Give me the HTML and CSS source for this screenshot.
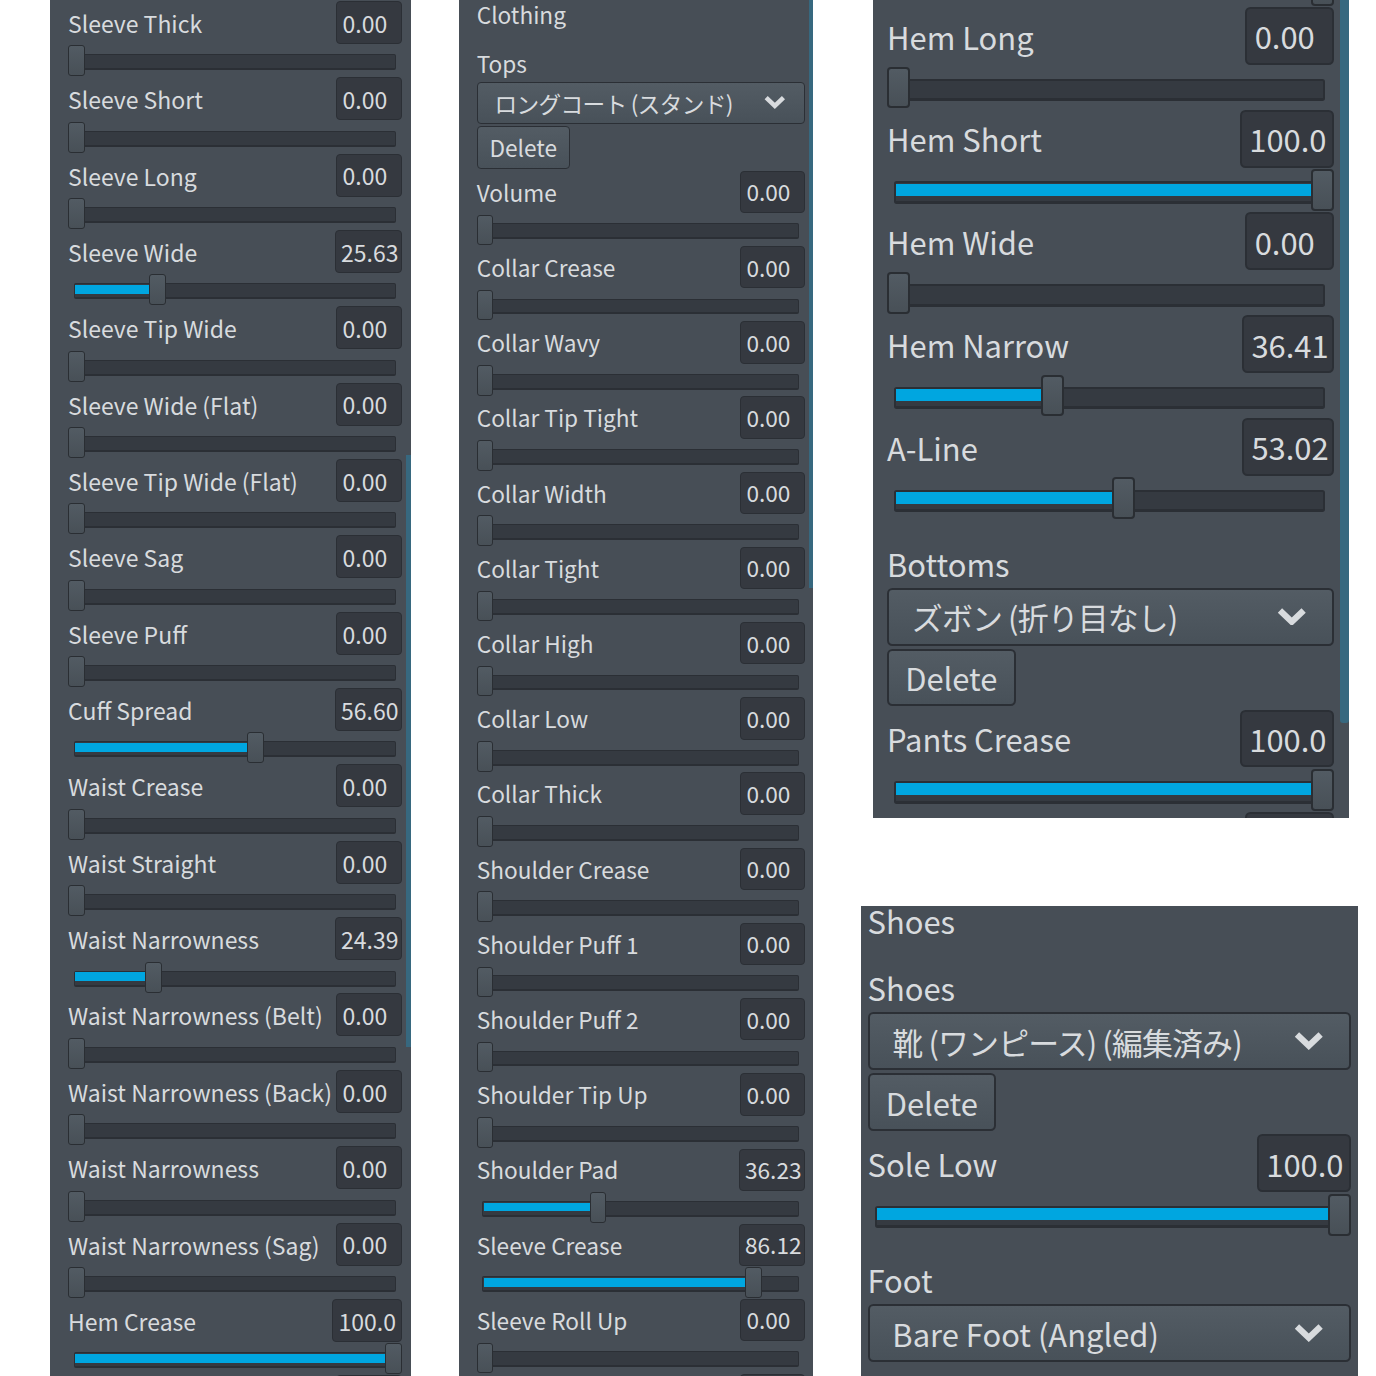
FILE: index.html
```html
<!DOCTYPE html>
<html lang="en">
<head>
<meta charset="utf-8">
<title>Clothing sliders</title>
<link rel="stylesheet" href="styles.css">
</head>
<body>
<div class="canvas">

  <section class="panel p-left">
    <div class="content">
      <div class="list">
        <div class="row"><div class="row-head"><span class="lbl">Sleeve Thick</span><span class="val">0.00</span></div><div class="slider" style="--v:0"><div class="fill"></div><div class="grab"></div></div></div>
        <div class="row"><div class="row-head"><span class="lbl">Sleeve Short</span><span class="val">0.00</span></div><div class="slider" style="--v:0"><div class="fill"></div><div class="grab"></div></div></div>
        <div class="row"><div class="row-head"><span class="lbl">Sleeve Long</span><span class="val">0.00</span></div><div class="slider" style="--v:0"><div class="fill"></div><div class="grab"></div></div></div>
        <div class="row"><div class="row-head"><span class="lbl">Sleeve Wide</span><span class="val">25.63</span></div><div class="slider" style="--v:0.2563"><div class="fill"></div><div class="grab"></div></div></div>
        <div class="row"><div class="row-head"><span class="lbl">Sleeve Tip Wide</span><span class="val">0.00</span></div><div class="slider" style="--v:0"><div class="fill"></div><div class="grab"></div></div></div>
        <div class="row"><div class="row-head"><span class="lbl">Sleeve Wide (Flat)</span><span class="val">0.00</span></div><div class="slider" style="--v:0"><div class="fill"></div><div class="grab"></div></div></div>
        <div class="row"><div class="row-head"><span class="lbl">Sleeve Tip Wide (Flat)</span><span class="val">0.00</span></div><div class="slider" style="--v:0"><div class="fill"></div><div class="grab"></div></div></div>
        <div class="row"><div class="row-head"><span class="lbl">Sleeve Sag</span><span class="val">0.00</span></div><div class="slider" style="--v:0"><div class="fill"></div><div class="grab"></div></div></div>
        <div class="row"><div class="row-head"><span class="lbl">Sleeve Puff</span><span class="val">0.00</span></div><div class="slider" style="--v:0"><div class="fill"></div><div class="grab"></div></div></div>
        <div class="row"><div class="row-head"><span class="lbl">Cuff Spread</span><span class="val">56.60</span></div><div class="slider" style="--v:0.566"><div class="fill"></div><div class="grab"></div></div></div>
        <div class="row"><div class="row-head"><span class="lbl">Waist Crease</span><span class="val">0.00</span></div><div class="slider" style="--v:0"><div class="fill"></div><div class="grab"></div></div></div>
        <div class="row"><div class="row-head"><span class="lbl">Waist Straight</span><span class="val">0.00</span></div><div class="slider" style="--v:0"><div class="fill"></div><div class="grab"></div></div></div>
        <div class="row"><div class="row-head"><span class="lbl">Waist Narrowness</span><span class="val">24.39</span></div><div class="slider" style="--v:0.2439"><div class="fill"></div><div class="grab"></div></div></div>
        <div class="row"><div class="row-head"><span class="lbl">Waist Narrowness (Belt)</span><span class="val">0.00</span></div><div class="slider" style="--v:0"><div class="fill"></div><div class="grab"></div></div></div>
        <div class="row"><div class="row-head"><span class="lbl">Waist Narrowness (Back)</span><span class="val">0.00</span></div><div class="slider" style="--v:0"><div class="fill"></div><div class="grab"></div></div></div>
        <div class="row"><div class="row-head"><span class="lbl">Waist Narrowness</span><span class="val">0.00</span></div><div class="slider" style="--v:0"><div class="fill"></div><div class="grab"></div></div></div>
        <div class="row"><div class="row-head"><span class="lbl">Waist Narrowness (Sag)</span><span class="val">0.00</span></div><div class="slider" style="--v:0"><div class="fill"></div><div class="grab"></div></div></div>
        <div class="row"><div class="row-head"><span class="lbl">Hem Crease</span><span class="val w">100.0</span></div><div class="slider" style="--v:1"><div class="fill"></div><div class="grab"></div></div></div>
        <div class="row"><div class="row-head"><span class="lbl"></span><span class="val"></span></div></div>
      </div>
    </div>
    <div class="vbar"><div class="thumb"></div></div>
  </section>

  <section class="panel p-mid">
    <div class="content">
      <div class="list">
        <div class="lblock">Clothing</div>
        <div class="lblock">Tops</div>
        <div class="dd"><span class="dd-text jp">ロングコート (スタンド)</span><svg class="chev" viewBox="0 0 22 14" aria-hidden="true"><path d="M2.2 2.6 L11 11 L19.8 2.6"/></svg></div>
        <div class="btn-line"><span class="btn">Delete</span></div>
        <div class="row"><div class="row-head"><span class="lbl">Volume</span><span class="val">0.00</span></div><div class="slider" style="--v:0"><div class="fill"></div><div class="grab"></div></div></div>
        <div class="row"><div class="row-head"><span class="lbl">Collar Crease</span><span class="val">0.00</span></div><div class="slider" style="--v:0"><div class="fill"></div><div class="grab"></div></div></div>
        <div class="row"><div class="row-head"><span class="lbl">Collar Wavy</span><span class="val">0.00</span></div><div class="slider" style="--v:0"><div class="fill"></div><div class="grab"></div></div></div>
        <div class="row"><div class="row-head"><span class="lbl">Collar Tip Tight</span><span class="val">0.00</span></div><div class="slider" style="--v:0"><div class="fill"></div><div class="grab"></div></div></div>
        <div class="row"><div class="row-head"><span class="lbl">Collar Width</span><span class="val">0.00</span></div><div class="slider" style="--v:0"><div class="fill"></div><div class="grab"></div></div></div>
        <div class="row"><div class="row-head"><span class="lbl">Collar Tight</span><span class="val">0.00</span></div><div class="slider" style="--v:0"><div class="fill"></div><div class="grab"></div></div></div>
        <div class="row"><div class="row-head"><span class="lbl">Collar High</span><span class="val">0.00</span></div><div class="slider" style="--v:0"><div class="fill"></div><div class="grab"></div></div></div>
        <div class="row"><div class="row-head"><span class="lbl">Collar Low</span><span class="val">0.00</span></div><div class="slider" style="--v:0"><div class="fill"></div><div class="grab"></div></div></div>
        <div class="row"><div class="row-head"><span class="lbl">Collar Thick</span><span class="val">0.00</span></div><div class="slider" style="--v:0"><div class="fill"></div><div class="grab"></div></div></div>
        <div class="row"><div class="row-head"><span class="lbl">Shoulder Crease</span><span class="val">0.00</span></div><div class="slider" style="--v:0"><div class="fill"></div><div class="grab"></div></div></div>
        <div class="row"><div class="row-head"><span class="lbl">Shoulder Puff 1</span><span class="val">0.00</span></div><div class="slider" style="--v:0"><div class="fill"></div><div class="grab"></div></div></div>
        <div class="row"><div class="row-head"><span class="lbl">Shoulder Puff 2</span><span class="val">0.00</span></div><div class="slider" style="--v:0"><div class="fill"></div><div class="grab"></div></div></div>
        <div class="row"><div class="row-head"><span class="lbl">Shoulder Tip Up</span><span class="val">0.00</span></div><div class="slider" style="--v:0"><div class="fill"></div><div class="grab"></div></div></div>
        <div class="row"><div class="row-head"><span class="lbl">Shoulder Pad</span><span class="val">36.23</span></div><div class="slider" style="--v:0.3623"><div class="fill"></div><div class="grab"></div></div></div>
        <div class="row"><div class="row-head"><span class="lbl">Sleeve Crease</span><span class="val">86.12</span></div><div class="slider" style="--v:0.8612"><div class="fill"></div><div class="grab"></div></div></div>
        <div class="row"><div class="row-head"><span class="lbl">Sleeve Roll Up</span><span class="val">0.00</span></div><div class="slider" style="--v:0"><div class="fill"></div><div class="grab"></div></div></div>
        <div class="row"><div class="row-head"><span class="lbl"></span><span class="val"></span></div></div>
      </div>
    </div>
    <div class="vbar"><div class="thumb"></div></div>
  </section>

  <div class="col-right">
    <section class="panel p-tr">
      <div class="content">
        <div class="list">
          <div class="row"><div class="row-head"></div><div class="slider" style="--v:1"><div class="fill"></div><div class="grab"></div></div></div>
          <div class="row"><div class="row-head"><span class="lbl">Hem Long</span><span class="val">0.00</span></div><div class="slider" style="--v:0"><div class="fill"></div><div class="grab"></div></div></div>
          <div class="row"><div class="row-head"><span class="lbl">Hem Short</span><span class="val w">100.0</span></div><div class="slider" style="--v:1"><div class="fill"></div><div class="grab"></div></div></div>
          <div class="row"><div class="row-head"><span class="lbl">Hem Wide</span><span class="val">0.00</span></div><div class="slider" style="--v:0"><div class="fill"></div><div class="grab"></div></div></div>
          <div class="row"><div class="row-head"><span class="lbl">Hem Narrow</span><span class="val">36.41</span></div><div class="slider" style="--v:0.3641"><div class="fill"></div><div class="grab"></div></div></div>
          <div class="row"><div class="row-head"><span class="lbl">A-Line</span><span class="val">53.02</span></div><div class="slider" style="--v:0.5302"><div class="fill"></div><div class="grab"></div></div></div>
          <div class="lblock">Bottoms</div>
          <div class="dd"><span class="dd-text jp">ズボン (折り目なし)</span><svg class="chev" viewBox="0 0 22 14" aria-hidden="true"><path d="M2.2 2.6 L11 11 L19.8 2.6"/></svg></div>
          <div class="btn-line"><span class="btn">Delete</span></div>
          <div class="row"><div class="row-head"><span class="lbl">Pants Crease</span><span class="val w">100.0</span></div><div class="slider" style="--v:1"><div class="fill"></div><div class="grab"></div></div></div>
          <div class="row"><div class="row-head"><span class="lbl"></span><span class="val"></span></div></div>
        </div>
      </div>
      <div class="vbar"><div class="thumb"></div></div>
    </section>

    <section class="panel p-br">
      <div class="content">
        <div class="list">
          <div class="lblock">Shoes</div>
          <div class="lblock">Shoes</div>
          <div class="dd"><span class="dd-text jp">靴 (ワンピース) (編集済み)</span><svg class="chev" viewBox="0 0 22 14" aria-hidden="true"><path d="M2.2 2.6 L11 11 L19.8 2.6"/></svg></div>
          <div class="btn-line"><span class="btn">Delete</span></div>
          <div class="row"><div class="row-head"><span class="lbl">Sole Low</span><span class="val w">100.0</span></div><div class="slider" style="--v:1"><div class="fill"></div><div class="grab"></div></div></div>
          <div class="lblock">Foot</div>
          <div class="dd"><span class="dd-text">Bare Foot (Angled)</span><svg class="chev" viewBox="0 0 22 14" aria-hidden="true"><path d="M2.2 2.6 L11 11 L19.8 2.6"/></svg></div>
        </div>
      </div>
      <div class="vbar"></div>
    </section>
  </div>

</div>
</body>
</html>
```

FILE: styles.css
```css
* {
  box-sizing: border-box;
  margin: 0;
  padding: 0;
}

html, body {
  background: #ffffff;
}

body {
  font-family: "Noto Sans CJK JP", "Noto Sans", sans-serif;
  color: #d8dbde;
}

.canvas {
  display: flex;
  align-items: flex-start;
  gap: 48px;
  padding-left: 50px;
  height: 1376px;
  overflow: hidden;
}

.col-right {
  display: flex;
  flex-direction: column;
  align-items: flex-start;
}

/* ---------- panel ---------- */
.panel {
  --u: 1px;
  display: flex;
  background: #474e56;
  overflow: hidden;
  font-size: calc(23 * var(--u));
  line-height: 1;
  flex: none;
}

.panel .content {
  flex: 1;
  min-width: 0;
}

.panel .vbar {
  flex: none;
  display: flex;
  justify-content: flex-end;
}

.panel .thumb {
  background: #37687f;
}

.p-left {
  --u: 1px;
  width: 361px;
  height: 1376px;
}
.p-left .content { padding-left: 18px; }
.p-left .list { margin-top: calc(1 * var(--u)); }
.p-left .vbar { width: 9px; }
.p-left .thumb { width: 5px; height: 592px; margin-top: 455px; }

.p-mid {
  --u: 0.985px;
  width: 354px;
  height: 1376px;
}
.p-mid .content { padding-left: 17.7px; }
.p-mid .list { margin-top: calc(-17.1 * var(--u)); }
.p-mid .vbar { width: 8px; }
.p-mid .thumb { width: 4px; height: 588px; }

.p-tr {
  --u: 1.345px;
  width: 476px;
  height: 818px;
  margin-left: 12px;
}
.p-tr .content { padding-left: 14px; }
.p-tr .list { margin-top: calc(-71.15 * var(--u)); }
.p-tr .vbar { width: 15px; }
.p-tr .thumb { width: 9px; height: 723px; border-radius: 0 0 3px 3px; }

.p-br {
  --u: 1.345px;
  width: 497px;
  height: 470px;
  margin-top: 88px;
}
.p-br .content { padding-left: 6.5px; }
.p-br .list { margin-top: calc(-20.9 * var(--u)); }
.p-br .vbar { width: 7px; }

/* ---------- slider rows ---------- */
.row {
  height: calc(76.35 * var(--u));
}

.row-head {
  display: flex;
  align-items: center;
  justify-content: space-between;
  height: calc(43 * var(--u));
}

.lbl {
  padding-top: calc(2 * var(--u));
  white-space: nowrap;
}

.val {
  display: flex;
  align-items: center;
  height: 100%;
  min-width: calc(66 * var(--u));
  padding: calc(1.5 * var(--u)) calc(2.5 * var(--u)) 0 calc(5.5 * var(--u));
  background: #353940;
  border: calc(1.5 * var(--u)) solid #2b2f35;
  border-radius: calc(4 * var(--u));
  white-space: nowrap;
}

.val.w {
  min-width: calc(70 * var(--u));
}

.slider {
  position: relative;
  height: calc(31 * var(--u));
  margin-top: calc(1.4 * var(--u));
}

.slider::before {
  content: "";
  position: absolute;
  left: calc(5.5 * var(--u));
  right: calc(6.5 * var(--u));
  top: calc(9 * var(--u));
  height: calc(13 * var(--u));
  background: #353a41;
  border: calc(1.5 * var(--u)) solid #2b2f35;
  border-bottom-width: calc(2.5 * var(--u));
  border-radius: calc(2 * var(--u));
}

.fill {
  position: absolute;
  left: calc(7 * var(--u));
  top: calc(10.5 * var(--u));
  height: calc(9 * var(--u));
  width: max(0px, calc(var(--v) * (100% - 17 * var(--u)) - 5 * var(--u)));
  background: #00a6e0;
}

.grab {
  position: absolute;
  top: 0;
  left: calc(var(--v) * (100% - 17 * var(--u)));
  width: calc(17 * var(--u));
  height: 100%;
  background: linear-gradient(#525b63, #485057);
  border: calc(1.5 * var(--u)) solid #2a2e33;
  border-radius: calc(3 * var(--u));
}

/* ---------- labels, dropdowns, buttons ---------- */
.lblock {
  height: calc(50 * var(--u));
  display: flex;
  align-items: flex-end;
  padding-bottom: calc(6 * var(--u));
  white-space: nowrap;
}

.dd {
  display: flex;
  align-items: center;
  justify-content: space-between;
  height: calc(43 * var(--u));
  padding: calc(2 * var(--u)) calc(19 * var(--u)) 0 calc(17 * var(--u));
  margin-bottom: calc(2.3 * var(--u));
  background: linear-gradient(#535c64, #485159);
  border: calc(1.5 * var(--u)) solid #2b2f35;
  border-radius: calc(4 * var(--u));
}

.dd-text {
  white-space: nowrap;
}

.dd-text.jp {
  letter-spacing: calc(-0.65 * var(--u));
}

.chev {
  width: calc(22 * var(--u));
  height: calc(14 * var(--u));
  flex: none;
  margin-top: calc(-3 * var(--u));
}

.chev path {
  fill: none;
  stroke: #d8dbde;
  stroke-width: 4.6;
  stroke-linejoin: miter;
  stroke-linecap: butt;
}

.btn-line {
  display: flex;
  margin-bottom: calc(2.3 * var(--u));
}

.btn {
  display: flex;
  align-items: center;
  height: calc(43 * var(--u));
  padding: calc(1.5 * var(--u)) calc(12 * var(--u)) 0;
  background: linear-gradient(#535c64, #485159);
  border: calc(1.5 * var(--u)) solid #2b2f35;
  border-radius: calc(4 * var(--u));
}
```
